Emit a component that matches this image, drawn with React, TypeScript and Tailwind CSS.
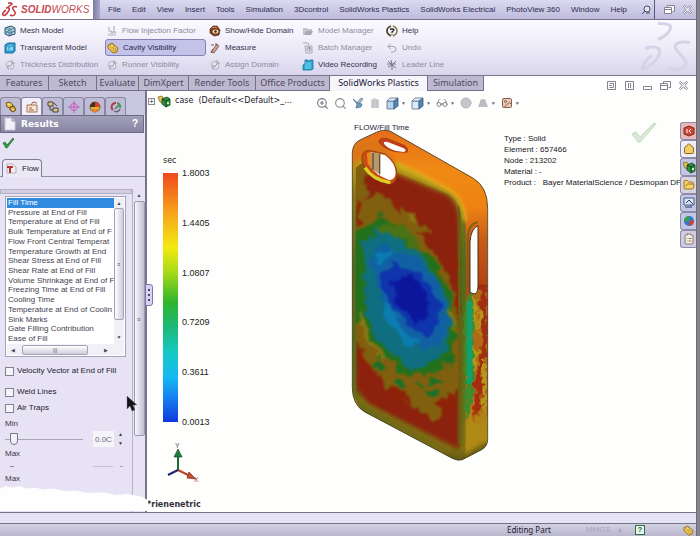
import React from "react";
import {
  Circle,
  ClipboardList,
  FolderOpen,
  Glasses,
  House,
  Image,
  Search,
  Undo2,
  ZoomIn,
} from "lucide-react";

const menus = [
  "File", "Edit", "View", "Insert", "Tools", "Simulation", "3Dcontrol",
  "SolidWorks Plastics", "SolidWorks Electrical", "PhotoView 360", "Window", "Help",
];

function MeshIcon() {
  return (
    <svg viewBox="0 0 12 12" className="size-3">
      <path d="M1 3 7 1l4 2v6l-6 2-4-2Z" fill="#a9d3e2" stroke="#33586e" />
      <path d="m1 3 4 2 6-2M5 5v6M1 6l4 2 6-2M3 2l4 2v6M1 9l4-4M5 11l6-6" fill="none" stroke="#3f6b82" strokeWidth=".7" />
    </svg>
  );
}

function CubeIcon() {
  return (
    <svg viewBox="0 0 12 12" className="size-3">
      <path d="M1 3 4 1h7v8l-2 2H1Z" fill="#2f9fd0" stroke="#1b6f9c" />
      <path d="m3 4 4-1 2 1v4L5 9 3 8Z" fill="#8bd8f2" />
      <path d="m3 4 2 1 4-1M5 5v4" fill="none" stroke="#1b7fb0" strokeWidth=".8" />
    </svg>
  );
}

function GoldPart({ className = "size-3" }: { className?: string }) {
  return (
    <svg viewBox="0 0 12 12" className={className}>
      <path d="M1 3 5 1l6 5-1 4-4 1-5-5Z" fill="#efc13c" stroke="#8a5f14" strokeWidth=".8" />
      <path d="m3 3 2-1 2 2-2 1.500ZM6 7l2-1 1 2-2 1Z" fill="#fff2b4" stroke="#7a5616" strokeWidth=".5" />
    </svg>
  );
}

function FeatureIcon() {
  return (
    <svg viewBox="0 0 12 12" className="size-3">
      <path d="M1 2 5 1l3 3-2 3-4-1Z" fill="#efc13c" stroke="#5c4416" strokeWidth=".8" />
      <path d="M5 6 9 5l2 4-3 2-3-2Z" fill="#d9a62c" stroke="#4a3714" strokeWidth=".8" />
      <path d="m3 3 2 1M7 8l2 1" stroke="#fff4c0" />
    </svg>
  );
}

function GreyPart() {
  return (
    <svg viewBox="0 0 12 12" className="size-3">
      <path d="M2 5a4 4 0 0 1 7-1l1 3-1 3H4Z" fill="#e3e0ea" stroke="#a9a5b5" strokeWidth=".8" />
      <path d="M4 10V6l2 2 3-5M8 1v3h3" fill="none" stroke="#9d99aa" strokeWidth=".9" />
    </svg>
  );
}

function InjectionIcon() {
  return (
    <svg viewBox="0 0 12 12" className="size-3">
      <path d="M3 2v3M8 1v4M2 6h3l1 2 2-2 2 2M2 10h8" fill="none" stroke="#b4afbf" strokeWidth="1.200" />
      <path d="M2 8h7l1 3H2Z" fill="#d5d1dd" />
    </svg>
  );
}

function DomainIcon() {
  return (
    <svg viewBox="0 0 12 12" className="size-3">
      <path d="M1 4 4 1h4l3 4-1 5-5 1-4-3Z" fill="#7b3c1c" stroke="#4d2414" strokeWidth=".7" />
      <ellipse cx="6.500" cy="6.500" rx="3" ry="2" fill="#f0d9b4" />
      <circle cx="6.500" cy="6.500" r="1.200" fill="#38241c" />
      <path d="m3 3 3-1 2 1" fill="none" stroke="#d89a5c" />
    </svg>
  );
}

function MeasureIcon() {
  return (
    <svg viewBox="0 0 12 12" className="size-3">
      <path d="M2 10 8 2l2 2-5 7Z" fill="#cf9d94" stroke="#7e504c" strokeWidth=".8" />
      <path d="M2 3h3M7 1v3M2 11l2-4" stroke="#7e504c" />
    </svg>
  );
}

function ManagerIcon() {
  return (
    <svg viewBox="0 0 12 12" className="size-3">
      <path d="M1 3h4l1 1h4v2H4l-2 4H1Z" fill="#c6c3cf" />
      <path d="M4 6h7l-2 4H2Z" fill="#aaa6b5" />
    </svg>
  );
}

function BatchIcon() {
  return (
    <svg viewBox="0 0 12 12" className="size-3">
      <path d="M1 1h5l1 2M3 4h7v7H4Z" fill="none" stroke="#aaa6b4" />
      <circle cx="7" cy="7" r="2" fill="none" stroke="#9f9baa" />
      <path d="M7 5v2h1" stroke="#9f9baa" />
    </svg>
  );
}

function VideoIcon() {
  return (
    <svg viewBox="0 0 12 12" className="size-3">
      <path d="M3 1h3v2l2-2h3v9l-2 1H1V6l2-1Z" fill="#2ba7d3" stroke="#176f9f" strokeWidth=".8" />
      <path d="M4 3v7M6 3v7M8 3v7" stroke="#92e0f4" strokeWidth=".8" />
    </svg>
  );
}

function CircleHelpIcon() {
  return (
    <svg viewBox="0 0 12 12" className="size-3">
      <path d="M5 1C2 2 1 4 1 6s2 4 4 5" fill="none" stroke="#4c4a30" strokeWidth="1.800" />
      <path d="M7 1c3 1 4 3 4 5s-2 4-4 5" fill="none" stroke="#85783a" strokeWidth="1.500" />
      <path d="M4 4h3l1 1-2 2v1" fill="none" stroke="#24232c" strokeWidth="1.300" />
      <path d="M6 9v1" stroke="#24232c" />
    </svg>
  );
}

function LeaderIcon() {
  return (
    <svg viewBox="0 0 12 12" className="size-3">
      <path d="m2 2 4 4 4-4M6 6v5M2 8l4-2 4 3M5 1l1 5M1 5h9" fill="none" stroke="#77738a" />
    </svg>
  );
}

function Conf() {
  return (
    <svg viewBox="0 0 12 12" className="size-3">
      <path d="M6 2a4 4 0 0 0-3 7" fill="none" stroke="#b53a54" strokeWidth="2" />
      <path d="M7 2a4 4 0 0 1 3 5" fill="none" stroke="#3d9a4b" strokeWidth="2" />
      <path d="M4 10a4 4 0 0 0 6-2" fill="none" stroke="#636072" strokeWidth="1.500" />
      <path d="m5 8 4-4" stroke="#3c8a49" strokeWidth="1.500" />
    </svg>
  );
}

function Appearance() {
  return (
    <svg viewBox="0 0 12 12" className="size-3">
      <circle cx="6" cy="6" r="5" fill="#e0b62d" stroke="#4d3326" strokeWidth=".7" />
      <path d="M6 6V1a5 5 0 0 1 5 5Z" fill="#d4422b" />
      <path d="M6 6H1a5 5 0 0 1 5-5Z" fill="#43301f" />
      <path d="M2 8h8l-2 3H4Z" fill="#e9842c" />
    </svg>
  );
}

function TreePart() {
  return (
    <svg viewBox="0 0 14 13" className="h-[13px] w-[14px]">
      <path d="M1 2 5 1l2 3v4L3 7Z" fill="#e5c34e" stroke="#7b5a18" strokeWidth=".7" />
      <path d="m5 4 5-2 3 2v6l-4 2-4-3Z" fill="#2c9440" stroke="#123f1e" strokeWidth=".8" />
      <path d="m5 4 4 2 4-2M9 6v6" fill="none" stroke="#123f1e" />
      <path d="M10 7h2v2h-2Z" fill="#c8efb4" />
    </svg>
  );
}

function ClipPlane() {
  return (
    <svg viewBox="0 0 12 12" className="size-3">
      <path d="M5 6 9 1l2 1-4 5Z" fill="#aebccb" stroke="#566f85" strokeWidth=".7" />
      <path d="M1 2 5 7l-1 4 5-1 1-3-4-1Z" fill="#6e9dba" stroke="#466d89" strokeWidth=".7" />
    </svg>
  );
}

function ViewCube({ tone = "#b8d3ea" }: { tone?: string }) {
  return (
    <svg viewBox="0 0 13 13" className="size-[13px]">
      <path d="M1 4h7v8H1Z" fill={tone} stroke="#54708d" strokeWidth=".8" />
      <path d="m1 4 3-3h8L8 4Z" fill="#e9f2fa" stroke="#54708d" strokeWidth=".8" />
      <path d="m8 4 4-3v8l-4 3Z" fill="#4f86b8" stroke="#3e5e7e" strokeWidth=".8" />
    </svg>
  );
}

function WindowGlyph({ d }: { d: string }) {
  return (
    <svg viewBox="0 0 11 11" className="size-[11px]" fill="#fff" stroke="#85828f">
      <path d={d} />
    </svg>
  );
}

const closeShape = "m1.500 2.500 1-1 3 2.500 3-2.500 1 1-2.500 3 2.500 3-1 1-3-2.500-3 2.500-1-1 2.500-3Z";
const restoreShape = "M3.500 3.500v-2h7v6h-2M.5 3.500h7v6h-7ZM.5 5.500h7";

type Tool = { label: string; icon: React.ReactNode; state?: "off" | "on" };

const ribbon: Tool[] = [
  { label: "Mesh Model", icon: <MeshIcon /> },
  { label: "Flow Injection Factor", icon: <InjectionIcon />, state: "off" },
  { label: "Show/Hide Domain", icon: <DomainIcon /> },
  { label: "Model Manager", icon: <ManagerIcon />, state: "off" },
  { label: "Help", icon: <CircleHelpIcon /> },
  { label: "Transparent Model", icon: <CubeIcon /> },
  { label: "Cavity Visibility", icon: <GoldPart />, state: "on" },
  { label: "Measure", icon: <MeasureIcon /> },
  { label: "Batch Manager", icon: <BatchIcon />, state: "off" },
  { label: "Undo", icon: <Undo2 className="size-3 text-[#a5a1b2]" />, state: "off" },
  { label: "Thickness Distribution", icon: <GreyPart />, state: "off" },
  { label: "Runner Visibility", icon: <GreyPart />, state: "off" },
  { label: "Assign Domain", icon: <GreyPart />, state: "off" },
  { label: "Video Recording", icon: <VideoIcon /> },
  { label: "Leader Line", icon: <LeaderIcon />, state: "off" },
];

const commandTabs = [
  { label: "Features", width: "w-[49px]" },
  { label: "Sketch", width: "w-[48px]" },
  { label: "Evaluate", width: "w-[42px]" },
  { label: "DimXpert", width: "w-[50px]" },
  { label: "Render Tools", width: "w-[67px]" },
  { label: "Office Products", width: "w-[74px]" },
  { label: "SolidWorks Plastics", width: "w-[98px]", active: true },
  { label: "Simulation", width: "w-[56px]" },
];

const results = [
  "Fill Time", "Pressure at End of Fill", "Temperature at End of Fill",
  "Bulk Temperature at End of F", "Flow Front Central Temperat",
  "Temperature Growth at End", "Shear Stress at End of Fill",
  "Shear Rate at End of Fill", "Volume Shrinkage at End of F",
  "Freezing Time at End of Fill", "Cooling Time", "Temperature at End of Coolin",
  "Sink Marks", "Gate Filling Contribution", "Ease of Fill",
];

function TitleBar() {
  return (
    <header className="flex h-5 items-stretch border-b border-[#77738f] bg-gradient-to-b from-[#dcdaf0] to-[#bdbbdc]">
      <div className="flex w-[93px] shrink-0 items-center gap-[3px] bg-white pl-[2px]">
        <svg viewBox="0 0 16 15" className="h-[15px] w-4 shrink-0" fill="none" stroke="#c4343c" strokeWidth="1.500">
          <path d="M6 1h3l1 1-4 3" />
          <path d="M4 6c4-1 4 1 2 4s-4 4-5 3 1-4 3-5" />
          <path d="M15 5c-3-1-5 0-4 2s3 3 2 5-3 2-5 1" />
        </svg>
        <span className="font-['Liberation_Sans',sans-serif] text-[10px] font-bold italic text-[#c64a50]">
          SOLID<span className="font-normal">WORKS</span>
        </span>
      </div>
      <div className="w-[7px] shrink-0 bg-gradient-to-r from-[#7e7ca0] to-[#a9a7cb]" />
      <nav className="flex flex-1 items-center gap-[11px] pl-2 text-[#2f2b4e]">
        {menus.map((m) => (
          <button key={m} className="whitespace-nowrap">{m}</button>
        ))}
        <button aria-label="Pin menu" className="ml-auto flex h-full items-center border-r border-[#5d5978] pr-[3px]">
          <svg viewBox="0 0 10 10" className="size-[10px]" fill="#e9e7f2" stroke="#4d4964">
            <circle cx="6" cy="4" r="3" />
            <path d="M1 9 4 6M5 8h4" />
          </svg>
        </button>
      </nav>
      <div className="flex shrink-0 items-center gap-[7px] pl-[9px] pr-[3px] text-[#6b6780]">
        <button aria-label="Restore"><WindowGlyph d={restoreShape} /></button>
        <button aria-label="Close"><WindowGlyph d={closeShape} /></button>
      </div>
    </header>
  );
}

function Ribbon() {
  return (
    <section className="flex h-[56px] justify-between border-b border-[#7a768c] bg-gradient-to-b from-[#fbfaff] via-[#eeebf9] to-[#d9d6ec]">
      <div className="grid auto-rows-[17px] grid-cols-[102px_103px_93px_84px_80px] pl-[3px] pt-[2px]">
        {ribbon.map((t) => (
          <button
            key={t.label}
            className={
              "flex items-center gap-1 whitespace-nowrap pl-px " +
              (t.state === "on"
                ? "w-[101px] rounded-[3px] border border-[#8482b4] bg-[#c3c3ea] text-[#29264c]"
                : t.state === "off"
                ? "text-[#8f8b9d]"
                : "text-[#34314c]")
            }
          >
            {t.icon}
            {t.label}
          </button>
        ))}
      </div>
      <svg viewBox="0 0 56 54" className="mr-[2px] w-14" fill="none" stroke="#d6d3e6" strokeWidth="3">
        <path d="M20 3c12 0 14 2 12 6s-7 8-12 10" />
        <path d="M7 28c14-4 18 1 12 10S3 50 4 48s2-8 10-13" />
        <path d="M52 22c-12-2-18 2-13 8s12 12 8 16-12 3-16 2" />
      </svg>
    </section>
  );
}

function CommandTabs() {
  return (
    <section className="flex h-[15px] items-stretch justify-between bg-white">
      <div role="tablist" className="flex font-['Noto_Sans',sans-serif] text-[9px]">
        {commandTabs.map((t) => (
          <button
            key={t.label}
            role="tab"
            aria-selected={!!t.active}
            className={
              t.width +
              " whitespace-nowrap border-r border-[#74708c] pb-px " +
              (t.active ? "bg-[#f6f5fb] text-[#22203a]" : "border-b bg-[#bdbad0] text-[#4d4960]")
            }
          >
            {t.label}
          </button>
        ))}
      </div>
      <div className="flex items-end gap-[7px] pr-[7px]">
        <button aria-label="Pane left"><WindowGlyph d="M1.500 1.500h8v8h-8ZM3.500 3.500h4v4h-4M3 5.500h3" /></button>
        <button aria-label="Pane right"><WindowGlyph d="M1.500 1.500h8v8h-8ZM4.500 3v5M6.500 3v5" /></button>
        <button aria-label="Minimize"><WindowGlyph d="M1.500 6.500h8v3h-8Z" /></button>
        <button aria-label="Restore document"><WindowGlyph d={restoreShape} /></button>
        <button aria-label="Close document"><WindowGlyph d={closeShape} /></button>
      </div>
    </section>
  );
}

const managerTabs = [
  { name: "Feature tree", icon: <FeatureIcon /> },
  { name: "Property manager", icon: (
    <svg viewBox="0 0 12 12" className="size-3"><path d="M1 4h10v7H1Z" fill="#f4e8df" stroke="#a9704e" /><path d="M3 7h3M3 9h5M5 4l2-3 4 1" fill="none" stroke="#a55a3a" /></svg>
  ), active: true },
  { name: "Configuration manager", icon: (
    <svg viewBox="0 0 12 12" className="size-3"><path d="M1 1h5v4H1ZM6 7h5v4H6Z" fill="#d9c88b" stroke="#4a4139" /><path d="M3 5v4h3M7 2l3 3" fill="none" stroke="#4a4139" /></svg>
  ) },
  { name: "DimXpert manager", icon: (
    <svg viewBox="0 0 12 12" className="size-3" fill="none" stroke="#c65bc0"><circle cx="6" cy="6" r="3.500" /><path d="M6 0v12M0 6h12" /></svg>
  ) },
  { name: "Display manager", icon: <Appearance /> },
  { name: "Plastics manager", icon: <Conf /> },
];

function Check({ label }: { label: string }) {
  return (
    <label className="flex items-center gap-[3px] text-[#22202f]">
      <input type="checkbox" className="size-[9px] appearance-none border border-[#85828f] bg-[#f6f4fa]" />
      {label}
    </label>
  );
}

function PropertyPanel() {
  return (
    <aside className="relative flex w-[147px] shrink-0 flex-col border-r-2 border-[#77748c] bg-[#e7e3f4]">
      <div className="flex h-6 items-end bg-[#c9c6df] pl-0 pt-[5px]">
        {managerTabs.map((t) => (
          <button
            key={t.name}
            aria-label={t.name}
            className={
              "flex h-[18px] w-[21px] items-center justify-center rounded-t-[3px] border border-b-0 border-[#8a87a3] " +
              (t.active ? "bg-[#f1effa]" : "bg-[#bfbcd8]")
            }
          >
            {t.icon}
          </button>
        ))}
      </div>
      <div className="mr-px flex h-[18px] items-center gap-[5px] border border-[#6d6a87] bg-gradient-to-b from-[#a3a0ba] to-[#8885a3] pl-[3px] pr-[5px]">
        <svg viewBox="0 0 12 14" className="h-[14px] w-3"><path d="M1 1h7l3 3v9H1Z" fill="#f2f1f8" stroke="#c9c7da" /><path d="M8 1v3h3" fill="none" stroke="#8d8aa5" /></svg>
        <h1 className="flex-1 font-['DejaVu_Sans',sans-serif] text-[9px] font-bold text-white">Results</h1>
        <button aria-label="Help on results" className="text-[10px] font-bold text-white">?</button>
      </div>
      <div className="flex h-[26px] items-start pl-[2px] pt-[4px]">
        <button aria-label="Accept">
          <svg viewBox="0 0 13 12" className="h-3 w-[13px]"><path d="m1 6 2-1 2 3 6-7 1 1-7 9H4Z" fill="#2fa04a" stroke="#1d6c30" strokeWidth=".7" /></svg>
        </button>
      </div>
      <div className="flex h-[18px] border-b border-[#918eaa] pl-[2px]">
        <button className="-mb-px flex h-[18px] w-10 items-center gap-[5px] rounded-t-[4px] border border-b-0 border-[#7f7c98] bg-[#ece9f6] pl-[3px] text-[#22202f]">
          <svg viewBox="0 0 11 11" className="size-[11px]"><path d="M1 1h6l3 3v6H1Z" fill="#f1eef3" stroke="#9a96a6" strokeWidth=".7" /><path d="M1 3h6v2H5v5H3V5H1Z" fill="#b9332b" /></svg>
          Flow
        </button>
      </div>

      <div className="flex flex-1 pt-3">
        <div className="flex-1">
          <div className="h-[5px] border border-[#b3afc4] bg-[#d2cddf]" />
          <div className="ml-[5px] mt-[2px] w-[121px] border border-[#a5a2b8] bg-white p-px">
            <div className="flex">
              <ul role="listbox" aria-label="Result plots" className="grid h-[146px] flex-1 grid-rows-15 overflow-hidden text-[#45424f]">
                {results.map((r, i) => (
                  <li
                    key={r}
                    role="option"
                    aria-selected={i === 0}
                    className={
                      "flex w-[107px] items-center whitespace-nowrap pl-px leading-[10px] " +
                      (i === 0 ? "bg-[#2f8be0] text-white" : "")
                    }
                  >
                    {r}
                  </li>
                ))}
              </ul>
              <div className="flex w-[10px] flex-col items-center bg-[#f1f0f6] text-[5px] text-[#4a4757]">
                <span className="h-[10px] leading-[10px]">▲</span>
                <span className="flex w-[10px] flex-1 items-center justify-center rounded-[2px] border border-[#a4a1b5] bg-gradient-to-r from-white to-[#cfccdc]">≡</span>
                <span className="h-6 pt-[12px] leading-[10px]">▼</span>
              </div>
            </div>
            <div className="flex h-[11px] items-center bg-[#f1f0f6] pl-1 text-[5px] text-[#4a4757]">
              <span className="w-[11px]">◀</span>
              <span className="flex h-[10px] w-[66px] items-center justify-center rounded-[2px] border border-[#a4a1b5] bg-gradient-to-b from-white to-[#cfccdc]">|||</span>
              <span className="ml-4">▶</span>
            </div>
          </div>
          <div className="flex flex-col pl-[5px] pt-2 leading-[12px]">
            <Check label="Velocity Vector at End of Fill" />
            <div className="mt-[9px] flex flex-col gap-1">
              <Check label="Weld Lines" />
              <Check label="Air Traps" />
            </div>
            <label htmlFor="min" className="mt-1 text-[#3a3748]">Min</label>
            <div className="flex h-[18px] items-center">
              <input
                id="min"
                type="range"
                defaultValue={0}
                className="h-[14px] w-[78px] appearance-none bg-[linear-gradient(#a9a6b8,#a9a6b8)] bg-[length:100%_1px] bg-center bg-no-repeat pl-[5px] [&::-webkit-slider-thumb]:h-3 [&::-webkit-slider-thumb]:w-2 [&::-webkit-slider-thumb]:appearance-none [&::-webkit-slider-thumb]:rounded-b-[4px] [&::-webkit-slider-thumb]:border [&::-webkit-slider-thumb]:border-[#77748a] [&::-webkit-slider-thumb]:bg-[#f4f2f9]"
              />
              <input aria-label="Minimum value" defaultValue="0.0C" className="ml-[10px] h-4 w-[21px] bg-[#f6f4fb] pl-[2px] text-[#6c6977]" />
              <div className="ml-1 flex flex-col text-[5px] leading-[9px] text-[#3c394a]">
                <span>▲</span>
                <span>▼</span>
              </div>
            </div>
            <span className="text-[#3a3748]">Max</span>
            <div className="flex h-[13px] items-center pl-[5px]">
              <span className="h-px w-1 bg-[#8e8b9c]" />
              <span className="ml-[79px] h-px w-5 bg-[#c3c0d0]" />
              <span className="ml-[7px] h-px w-[3px] bg-[#a9a6b8]" />
            </div>
            <span className="text-[#3a3748]">Max</span>
          </div>
        </div>
        <div className="flex w-[13px] flex-col items-center border-l border-[#b6b3c8] text-[5px] text-[#4a4757]">
          <span className="h-3 leading-[12px]">▲</span>
          <span className="flex h-[235px] w-[11px] items-center justify-center rounded-[2px] border border-[#9c99b0] bg-gradient-to-r from-[#f7f6fb] to-[#c2bfd4]">≡</span>
        </div>
      </div>
      <svg viewBox="0 0 147 30" className="absolute bottom-0 left-0 h-[27px] w-[148px]" preserveAspectRatio="none">
        <path d="M0 4 6 1l6 2 8-2 6 3 9-1 8 2 10-1 12 3 10-1 12 3 16-1 12 3 12-1 14 3 6 4v12H0Z" fill="#fefefe" />
      </svg>
      <svg viewBox="0 0 12 16" className="absolute left-[126px] top-[305px] z-10 h-4 w-3">
        <path d="M1 0v13l3-3 2 5 3-1-2-5h4Z" fill="#17151c" stroke="#77748a" strokeWidth=".4" />
      </svg>
      <button aria-label="Collapse panel" className="absolute -right-[8px] top-[193px] z-10 flex h-[22px] w-[8px] flex-col items-center justify-center gap-[3px] rounded-r-[3px] border border-[#7a77a0] bg-[#d6d4ee]">
        <span className="size-[2px] bg-[#45427a]" />
        <span className="size-[2px] bg-[#45427a]" />
        <span className="size-[2px] bg-[#45427a]" />
      </button>
    </aside>
  );
}

function Legend() {
  const ticks = ["1.8003", "1.4405", "1.0807", "0.7209", "0.3611", "0.0013"];
  return (
    <div className="text-[8px] leading-[10px] text-[#222]">
      <div className="font-['DejaVu_Sans',sans-serif]">sec</div>
      <div className="mt-[2px] flex gap-1">
        <div className="my-[5px] h-[249px] w-[15px] bg-[linear-gradient(to_bottom,#f04a1c_0%,#f6a41c_16%,#f4ea10_30%,#a4da18_40%,#2fb52c_52%,#1cb978_62%,#18c9c4_72%,#14b8f2_82%,#167bf0_91%,#1038dc_100%)]" />
        <div className="flex h-[259px] flex-col justify-between text-[9px]">
          {ticks.map((t) => <span key={t}>{t}</span>)}
        </div>
      </div>
    </div>
  );
}

function Triad() {
  return (
    <svg viewBox="0 0 38 42" className="h-[42px] w-[38px]" strokeWidth="1.500">
      <path d="M15 28V12" stroke="#1d6b34" strokeWidth="2" />
      <path d="m11 15 4-8 4 8Z" fill="#1f7d3b" stroke="#124b25" strokeWidth=".7" />
      <path d="m15 28 12 6" stroke="#b5432c" strokeWidth="2" />
      <path d="m26 30 7 7-9-1Z" fill="#c44c30" stroke="#7c2c1c" strokeWidth=".7" />
      <path d="m15 28-10 5" stroke="#1f2370" strokeWidth="2" />
      <text x="12" y="6" fontSize="7" fill="#555">Y</text>
      <text x="31" y="40" fontSize="7" fill="#a44">X</text>
    </svg>
  );
}

const caseOutline =
  "M22 800V95Q24 66 45 57L98 32Q115 24 135 30L385 172Q428 198 428 262V955Q428 976 410 986L352 1016Q340 1021 322 1012L58 872Q22 850 22 800Z";

function PhoneCase() {
  return (
    <svg viewBox="15 18 426 1020" className="h-[340px] w-[142px]">
      <defs>
        <filter id="rough" x="-10%" y="-10%" width="120%" height="120%" colorInterpolationFilters="sRGB">
          <feTurbulence type="fractalNoise" baseFrequency=".03" numOctaves="3" seed="11" />
          <feDisplacementMap in="SourceGraphic" scale="42" xChannelSelector="R" yChannelSelector="G" />
          <feGaussianBlur stdDeviation="3" />
        </filter>
        <filter id="grit" x="-10%" y="-10%" width="120%" height="120%" colorInterpolationFilters="sRGB">
          <feTurbulence type="fractalNoise" baseFrequency=".045" numOctaves="2" seed="3" />
          <feDisplacementMap in="SourceGraphic" scale="34" xChannelSelector="R" yChannelSelector="G" />
          <feGaussianBlur stdDeviation="1.500" />
        </filter>
        <filter id="soften" x="-30%" y="-30%" width="160%" height="160%"><feGaussianBlur stdDeviation="6" /></filter>
        <linearGradient id="shell" x1="0" y1="0" x2="0" y2="1">
          <stop offset="0" stopColor="#e2661a" />
          <stop offset=".14" stopColor="#f08a14" />
          <stop offset=".25" stopColor="#ee8212" />
          <stop offset=".34" stopColor="#c85c18" />
          <stop offset=".47" stopColor="#b04416" />
          <stop offset=".75" stopColor="#b8781a" />
          <stop offset="1" stopColor="#a88a14" />
        </linearGradient>
        <linearGradient id="rim" gradientUnits="userSpaceOnUse" x1="0" y1="30" x2="0" y2="1020">
          <stop offset="0" stopColor="#d9701a" />
          <stop offset=".1" stopColor="#b89a18" />
          <stop offset=".2" stopColor="#86741a" />
          <stop offset=".4" stopColor="#4c6c1c" />
          <stop offset=".7" stopColor="#5e6a18" />
          <stop offset="1" stopColor="#7c6a14" />
        </linearGradient>
        <clipPath id="outline"><path d={caseOutline} /></clipPath>
        <clipPath id="face">
          <path d="M32 800V140L60 120L150 150L315 222Q350 245 350 310V960Q348 1000 320 992L66 858Q32 840 32 800Z" />
        </clipPath>
      </defs>
      <g clipPath="url(#outline)">
        <path d="M0 0h450v1040H0Z" fill="url(#shell)" />
        <path d="M20 810V130Q40 100 80 108L158 124L318 212Q362 240 362 330V1010L330 1020L50 872Z" fill="url(#rim)" />
        <path d="M20 90Q40 50 100 60L160 128L40 110L22 150Z" fill="#dc7418" filter="url(#soften)" />
        <path d="M150 126 312 208Q350 232 360 300" fill="none" stroke="#e2b41a" strokeWidth="12" filter="url(#soften)" />
        <g clipPath="url(#face)">
          <path d="M45 150 160 160 305 222Q343 248 343 320V985L70 850L32 800Z" fill="#8c2208" filter="url(#soften)" />
          <g filter="url(#rough)">
            <path d="M20 120 66 135 62 240 90 210 125 225 165 255 240 315 262 345 215 330 268 395 310 470 335 550 355 640 353 770 328 835 264 905 215 865 130 805 70 720 20 640Z" fill="#80600e" />
            <path d="M20 330 46 330 100 295 150 308 215 365 284 440 318 520 336 620 315 710 265 752 180 768 130 712 70 655 50 600 20 620Z" fill="#23701c" />
            <path d="M54 365 104 318 160 342 222 396 274 456 308 540 322 622 297 695 235 738 190 750 144 698 90 645 66 572 56 470Z" fill="#0f6e80" />
            <path d="M78 420 112 368 160 390 222 415 278 475 304 560 310 640 265 676 232 696 190 656 135 604 104 520Z" fill="#1160a4" />
            <path d="M90 400 150 380 140 410 100 430ZM110 550 130 550 190 640 230 670 190 680 130 610Z" fill="#0c7cb0" />
            <path d="M108 456 148 432 220 456 266 506 288 590 254 650 208 628 145 564 114 510Z" fill="#0f34ac" />
            <path d="M140 476 200 460 244 516 254 586 212 606 160 550Z" fill="#0b169c" />
            <path d="m82 275 28-8 6 16-24 8ZM92 690l22 4 14 12-24 6ZM86 722l26 2 14 18-28 4ZM150 775l20-2 12 16-16 10ZM248 772l36 2 4 14-34 4ZM244 812l34-4 6 14-32 8ZM215 790l18 2v12l-18-4ZM300 710l20-14 6 24-20 12Z" fill="#177026" />
            <path d="m100 325 50-14 50 34 40 50-14 4-46-46-34-18-40 6Z" fill="#4b7216" />
            <path d="m180 270 34 16 16 20-30-4ZM50 560l10 40 20 65 40 45-20-4-40-55-20-60ZM310 560l18 20 8 60-14-20Z" fill="#8c7a14" />
            <path d="m34 240 18 10-4 50-14 20ZM140 240l30 10-6 16-24-8ZM325 400l14 30-8 50-16-60ZM330 480l16 60v60l-18-60ZM275 850l40-30 20 30-40 40ZM130 800l40 6 30 40-50-16ZM34 670l20 20 30 60-40-10Z" fill="#8e2208" />
          </g>
          <path d="M30 340v250" stroke="#1c6630" strokeWidth="12" filter="url(#soften)" />
          <path d="m343 250 1 720" stroke="#6a5e12" strokeWidth="8" />
          <path d="M36 830 66 856 320 992" fill="none" stroke="#8a6a12" strokeWidth="12" filter="url(#soften)" />
        </g>
        <g filter="url(#grit)">
          <path d="M384 500h50v380l-22 30-28-20Z" fill="#b06a16" />
          <path d="m404 486 24 8-6 90-18 30ZM412 590l16 20-4 90-18 24ZM390 740l22 16-4 110-20 40ZM402 680l20 10-6 60-14 10Z" fill="#a42c10" />
          <path d="m384 520 14 24-6 90-10-24ZM402 560l8 24-8 60-8-24ZM386 660l12 24-6 70-10-16ZM414 720l12 10v130l-12 20Z" fill="#b4961a" />
        </g>
        <path d="M358 522q16-14 28-2V830q-8 40-28 60Z" fill="#3f8a2a" filter="url(#grit)" />
        <path d="m366 540 16 2v244l-16 4Z" fill="#13a070" />
        <path d="m362 900 66-40v110l-66 40Z" fill="#b08e14" opacity=".7" filter="url(#soften)" />
        <path d="m300 1010 50 8 80-46" fill="none" stroke="#5c5414" strokeWidth="22" opacity=".8" filter="url(#soften)" />
        <path d="M368 520V345q4-36 30-42" fill="none" stroke="#7c6218" strokeWidth="6" />
      </g>
      <path d="M375 514V362Q378 322 399 314V498Q398 522 384 518Z" fill="#fefefe" stroke="#4b2d18" strokeWidth="3" />
      <path d="M50 118Q48 88 74 88L118 98Q156 122 156 160Q154 192 128 190Q60 166 50 118Z" fill="#cc4c16" stroke="#7a3a14" strokeWidth="2" />
      <path d="M60 140Q84 178 136 185" fill="none" stroke="#dcd024" strokeWidth="10" />
      <path d="M66 96 78 92V140L68 128Z" fill="#e88a1c" />
      <path d="M78 94 120 102Q152 126 152 156Q150 178 132 177Q92 162 78 138Z" fill="#fefefe" />
      <path d="M78 94 105 98V160Q84 150 78 138Z" fill="#b89a68" />
      <path d="M84 96v50M104 98v62" stroke="#5c4c38" strokeWidth="4" />
      <path d="M102 62Q102 50 124 52L180 74Q192 84 186 94L150 92Q106 78 102 62Z" fill="#c4401a" stroke="#8a3416" strokeWidth="2" />
      <path d="M116 66Q118 60 130 64L176 82Q188 90 176 93L150 89Q122 80 116 66Z" fill="#fefefe" />
      <path d={caseOutline} fill="none" stroke="#3d3820" strokeWidth="2.500" />
    </svg>
  );
}

const viewTools = [
  { name: "Zoom to fit", icon: <ZoomIn className="size-[13px] text-[#777482]" /> },
  { name: "Zoom to area", icon: <Search className="size-[13px] text-[#8b8894]" /> },
  { name: "Previous view", icon: <ClipPlane /> },
  { name: "Section view", icon: <svg viewBox="0 0 12 12" className="size-3"><path d="M2 3 5 1l5 2v8H2Z" fill="#cfccd4" /><path d="M5 3v8M8 3v8" stroke="#bbb8c2" /></svg> },
  { name: "View orientation", icon: <ViewCube />, menu: true },
  { name: "Display style", icon: <ViewCube tone="#dcebf6" />, menu: true },
  { name: "Hide items", icon: <Glasses className="size-3 text-[#8b8894]" />, menu: true },
  { name: "Edit appearance", icon: <Circle className="size-3 fill-[#c6c4cc] text-[#b5b3bc]" /> },
  { name: "Apply scene", icon: <svg viewBox="0 0 12 12" className="size-3"><path d="M3 5a3 3 0 0 1 6 0l2 5H1Z" fill="#bdbbc4" /></svg>, menu: true },
  { name: "View settings", icon: <Image className="size-3 fill-[#e2c9b8] text-[#8f5d47]" />, menu: true },
];

const taskTabs = [
  { name: "Resources", icon: <svg viewBox="0 0 12 12" className="size-3"><path d="m1 3 5-2 5 2v6l-5 2-5-2Z" fill="#cf4632" stroke="#7f2a22" /><path d="M4 4v4M8 4 6 6l2 2" stroke="#fff" fill="none" /></svg>, tone: "bg-[#e9b9bb]" },
  { name: "Home", icon: <House className="size-3 fill-[#f1cf63] text-[#8b671f]" />, tone: "bg-[#eeecf6]" },
  { name: "Design library", icon: <TreePart />, tone: "bg-[#c3c5e4]" },
  { name: "File explorer", icon: <FolderOpen className="size-3 fill-[#f4d56c] text-[#9a7425]" />, tone: "bg-[#d9d4de]" },
  { name: "View palette", icon: <svg viewBox="0 0 12 12" className="size-3"><path d="M1 1h10v7H1Z" fill="#dbe6f3" stroke="#465a86" /><path d="m3 6 3-3 4 4M2 10h5M8 8v3" fill="none" stroke="#2b3f74" /></svg>, tone: "bg-[#c3c5e4]" },
  { name: "Appearances", icon: <svg viewBox="0 0 12 12" className="size-3"><circle cx="6" cy="6" r="5" fill="#3577c2" /><path d="M6 6V1a5 5 0 0 0-5 5Z" fill="#3aa04a" /><path d="M6 6h5a5 5 0 0 1-4 5Z" fill="#d0442f" /></svg>, tone: "bg-[#c3c5e4]" },
  { name: "Custom properties", icon: <ClipboardList className="size-3 fill-[#f4efe5] text-[#8b7768]" />, tone: "bg-[#cfcde3]" },
];

function Viewport() {
  return (
    <main className="flex min-w-0 flex-1 flex-col bg-[#fefefd]">
      <div className="flex h-6 items-center">
        <div className="flex w-[169px] items-center gap-[2px] whitespace-nowrap pl-px pb-1 text-[8px] text-[#22202c]">
          <span className="flex size-[7px] items-center justify-center border border-[#8a8794] text-[7px] leading-none">+</span>
          <TreePart />
          <span className="pl-[2px] font-['DejaVu_Sans',sans-serif]">case&nbsp; (Default&lt;&lt;Default&gt;_...</span>
        </div>
        <div className="flex items-center gap-[5px]">
          {viewTools.map((t) => (
            <button key={t.name} aria-label={t.name} className="flex items-center gap-[2px]">
              {t.icon}
              {t.menu && <span className="text-[5px] text-[#6f6c79]">▼</span>}
            </button>
          ))}
        </div>
      </div>
      <div className="flex flex-1">
        <div className="flex w-[203px] flex-col pt-[41px]">
          <div className="pl-4"><Legend /></div>
          <div className="pl-4 pt-[15px]"><Triad /></div>
          <div className="pt-[14px] font-['DejaVu_Sans',sans-serif] text-[8px] font-bold leading-[14px] text-[#33313c]">*rienenetric</div>
        </div>
        <figure className="relative shrink-0 pt-3">
          <PhoneCase />
          <figcaption className="absolute left-1 top-[7px] whitespace-nowrap text-[8px] leading-[12px] text-[#26243a]">
            FLOW/Fill Time
          </figcaption>
        </figure>
        <div className="min-w-0 flex-1 pl-3 pt-[7px]">
          <div className="flex h-[11px] justify-end pr-[22px]">
            <svg viewBox="0 0 28 22" className="h-[22px] w-7 shrink-0"><path d="m2 12 4-2 4 5L24 1l2 1-16 18H8Z" fill="#d8ead4" stroke="#c4d6c2" /></svg>
          </div>
          <div className="whitespace-pre text-[8px] leading-[11px] text-[#17161c]">
            <p>Type : Solid</p>
            <p>Element : 657466</p>
            <p>Node : 213202</p>
            <p>Material : -</p>
            <p>{"Product :   Bayer MaterialScience / Desmopan DF"}</p>
          </div>
        </div>
        <div className="z-10 flex w-4 shrink-0 flex-col pt-[7px]">
          {taskTabs.map((t) => (
            <button key={t.name} aria-label={t.name} className={"flex h-[18px] items-center justify-center rounded-l-[3px] border border-r-0 border-[#8d8aab] " + t.tone}>
              {t.icon}
            </button>
          ))}
        </div>
      </div>
    </main>
  );
}

export default function App() {
  return (
    <div className="flex h-screen bg-[#86848f] font-['Liberation_Sans',sans-serif] text-[8px] leading-[12px]">
      <div className="flex min-w-0 flex-1 flex-col">
        <TitleBar />
        <Ribbon />
        <CommandTabs />
        <div className="flex min-h-0 flex-1">
          <PropertyPanel />
          <Viewport />
        </div>
        <div className="h-[12px] border-b border-t border-[#77737f] bg-[#e5e4f6]" />
        <footer className="flex h-3 items-center justify-end bg-gradient-to-b from-[#d3d1e4] to-[#b9b6cd] pr-[2px] text-[#22202c]">
          <span className="w-[79px] font-['Noto_Sans',sans-serif]">Editing Part</span>
          <span className="w-[49px] text-[#a9a6b8]">MMGS &nbsp; ▴</span>
          <button aria-label="Quick tips" className="mr-[38px] flex size-[10px] items-center justify-center border border-[#2d6f4d] bg-[#e6f4ea] font-bold text-[#1f6b42]">?</button>
          <GoldPart className="size-[11px]" />
        </footer>
      </div>
      <div className="w-1 border-l border-[#6d6b77]" />
    </div>
  );
}
